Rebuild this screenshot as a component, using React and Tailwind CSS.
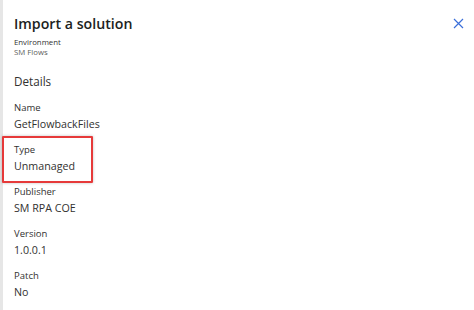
import React from "react";

function Field({ label, value }) {
  return (
    <div className="flex flex-col">
      <div className="text-[9.5px] leading-[14px] text-[#323130]">{label}</div>
      <div className="mt-[1px] text-[10.7px] leading-[17px] text-[#323130]">{value}</div>
    </div>
  );
}

export default function App() {
  return (
    <div
      className="w-[474px] h-[310px] bg-white flex overflow-hidden"
      style={{ fontFamily: '"Open Sans", "Noto Sans", sans-serif' }}
    >
      <div className="w-[3px] bg-[#e6e6e6] shrink-0" />
      <div className="flex-1 relative pl-[11px] pt-[13px]">
        <div className="text-[14.2px] leading-[22px] font-semibold text-[#201f1e]">Import a solution</div>
        <button className="absolute right-[10px] top-[18px] text-[#3b6fd9]">
          <svg width="11" height="11" viewBox="0 0 11 11">
            <path d="M1 1 L10 10 M10 1 L1 10" stroke="currentColor" strokeWidth="1.2" />
          </svg>
        </button>
        <div className="mt-[2px] text-[7.8px] leading-[10px] text-[#323130]">Environment</div>
        <div className="text-[7.8px] leading-[10px] text-[#605e5c]">SM Flows</div>
        <div className="mt-[15px] text-[11.7px] leading-[18px] text-[#323130]">Details</div>
        <div className="mt-[11px] flex flex-col gap-[10px]">
          <Field label="Name" value="GetFlowbackFiles" />
          <div className="relative">
            <div className="absolute left-[-12px] top-[-7px] w-[91px] h-[47px] border-[2.5px] border-[#e63a3a] rounded-[1px] shadow-[0_0_3px_rgba(0,0,0,0.25)]" />
            <Field label="Type" value="Unmanaged" />
          </div>
          <Field label="Publisher" value="SM RPA COE" />
          <Field label="Version" value="1.0.0.1" />
          <Field label="Patch" value="No" />
        </div>
      </div>
    </div>
  );
}
